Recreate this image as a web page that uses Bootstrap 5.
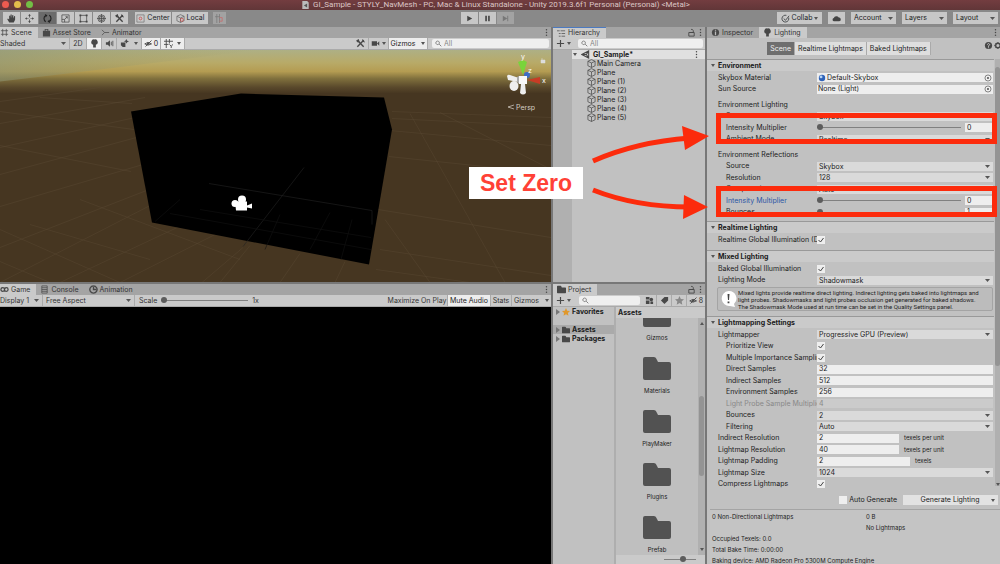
<!DOCTYPE html>
<html lang="en">
<head>
<meta charset="utf-8">
<meta name="viewport" content="width=device-width, initial-scale=1">
<title>GI_Sample - STYLY_NavMesh</title>
<link href="https://cdn.jsdelivr.net/npm/bootstrap@5.3.0/dist/css/bootstrap.min.css" rel="stylesheet">
<script src="https://cdn.jsdelivr.net/npm/bootstrap@5.3.0/dist/js/bootstrap.bundle.min.js"></script>
<style>
:root{--ink:#1c1c1c;--panel:#c1c1c1;--bar:#cacaca;--strip:#a4a4a4;--field:#eee;--drop:#dadada;--red:#fc2b0c}
body{font-family:Inter,"Liberation Sans",sans-serif;font-size:7px;line-height:10px;color:var(--ink);background:#777;height:100vh;overflow:hidden;cursor:default}
svg{display:block;flex:none}
.ic{width:9px;height:9px;fill:currentColor;stroke:currentColor;stroke-width:0;color:#484848}
.tb .ic{color:inherit}
.ol{fill:none;stroke-width:.8}
button,select,input{font:inherit;color:inherit;border:0;border-radius:0;padding:0;margin:0;min-width:0}
button{display:flex;align-items:center;justify-content:center;gap:2px;background:transparent;white-space:nowrap}
h2,p{font-size:7px;line-height:10px;margin:0}
h2{font-weight:700}
.win-title{height:10px;background:linear-gradient(#733d40,#613638);color:#dcc6c6;font:8px/8px Roboto,sans-serif;padding-bottom:1px}
.light{width:7px;height:7px;border-radius:50%}
.main-tools{height:17px;background:#898989;display:grid;grid-template-columns:461fr auto 486fr;padding-bottom:1px}
.tb{height:12px;background:#c7c7c7;color:#444}
.w18{width:17px}
.w12{width:13px}
.w36{width:36px}
.tb.on{background:#6b6b6b;color:#eee}
.tb.off{background:#a2a2a2;color:#777}
.tri{width:0;height:0;border:2px solid transparent;border-top:3px solid #555;border-bottom:0;flex:none}
.tri-r{width:0;height:0;border:3px solid transparent;border-left:4px solid #777;border-right:0;flex:none}
.work{display:grid;grid-template-columns:minmax(0,551fr) minmax(0,152fr) minmax(0,293fr);column-gap:2px;min-height:0}
.tabs{height:11px;background:var(--strip);color:#333;flex:none}
.tabs a{color:#333;text-decoration:none;gap:2px;height:11px;padding:0 6px 0 4px}
.tabs a.on{background:var(--bar)}
.tabs a.blue{border-top:1px solid #4c7ac0}
.tools{height:12px;background:var(--bar);flex:none;border-bottom:1px solid #aaa;color:#333}
.tools button{height:11px;border-right:1px solid #aaa;color:#333;flex-shrink:0}
.tools .lit{background:#ededed;color:#222}
.tools .nb{border:0}
.drop,.plain{appearance:none;background:var(--drop) url("data:image/svg+xml,%3Csvg xmlns='http://www.w3.org/2000/svg' width='5' height='3'%3E%3Cpath d='M0 0h5L2.500 3z' fill='%23555'/%3E%3C/svg%3E") no-repeat right 3px center;height:9px;line-height:9px;width:100%}
.plain{background-color:transparent;border-right:1px solid #aaa;height:11px}
.main-tools .drop{background-color:#c7c7c7;height:12px;line-height:12px;padding-left:3px}
.main-tools .w44{width:45px;flex:none}
.w69{width:70px}.w42{width:43px}.w92{width:92px}
.search{height:9px;background:#efefef;border-radius:2px;color:#777;padding:0 3px;gap:2px;min-width:0}
.search .ic{width:7px;height:7px;color:#777}
.search input{background:transparent;width:100%;height:9px;outline:0}
.search input::placeholder{color:#888;opacity:1}
.game,.scene{position:relative;min-height:0;overflow:hidden}
.scene{flex:233 1 0;background:#463621}
.game{flex:258 1 0;background:#000}
.gizmo{position:absolute;right:2px;top:3px}
.hier{flex:233 1 0;background:#b0b0b0;padding-left:19px;min-height:0}
.tree{background:var(--panel);height:100%}
.tree li{height:9px;line-height:9px;padding-left:15px;gap:1px}
.tree li.root{background:#e0e0e0;padding:0 4px 0 1px}
.proj{flex:258 1 0;min-height:0}
.side{width:63px;background:var(--panel);border-right:2px solid #aeaeae;flex:none}
.side div{height:9px;line-height:9px;gap:2px;padding-left:3px;font-weight:700}
.side .ic{width:8px;height:8px}
.side .sel{background:#aaa}
.assets{background:#bfbfbf;min-height:0}
.assets h2{background:#cacaca;padding:1px 2px 0}
.grid-area{display:flex;flex-direction:column;justify-content:flex-end;align-items:center;gap:14px;overflow:hidden;min-height:0;flex:1 1 0}
.grid-area figure{margin:0;display:flex;flex-direction:column;align-items:center;gap:6px;flex:none}
.grid-area figcaption{font-size:6px;line-height:10px}
.sbar{width:7px;background:#b0b0b0;flex:none}
.thumb{width:5px;border-radius:3px;background:#949494}
.insp{background:var(--panel);position:relative;min-height:0;overflow:hidden}
.seg button{height:13px;padding:0 3px;background:#dedede;border-right:1px solid #aaa}
.seg button.on{background:#6e6e6e;color:#eee}
.sec{height:12px;background:#cacaca;border-top:1px solid #999;padding-left:4px;gap:3px;margin-right:6px}
.rows{display:grid;grid-auto-rows:1fr;align-items:center;padding-right:7px;position:relative}
.n1{height:12px}.n2{height:23px}.n4{height:46px}.n6{height:69px}.n14{height:161px}
.rw{display:flex;align-items:center;height:10px;white-space:nowrap}
.rw>label,.rw>.lb{width:110px;padding-left:11px;flex:none;overflow:hidden}
.rw.in>label{padding-left:19px}
.rw select,.rw .tx{padding-left:2px}
.tx{background:var(--field);height:9px;width:100%;outline:0}
.obj{background:var(--field);height:9px;width:100%;padding:0 1px;gap:1px}
.obj input{background:transparent;width:100%;height:9px}
.obj .ic{width:8px;height:8px}
.half{width:82px}.most{width:93px}
.unit{padding-left:5px;font-size:6px}
.dis{color:#888}.dis .tx{background:#cbcbcb}
.num{width:28px;flex:none}
input[type=range]{appearance:none;background:transparent;height:9px;flex:1 1 0;width:50px}
input[type=range]::-webkit-slider-runnable-track{height:1px;background:#808080}
input[type=range]::-webkit-slider-thumb{appearance:none;width:6px;height:6px;border-radius:50%;background:#5c5c5c;margin-top:-3px}
input[type=checkbox]{appearance:none;width:8px;height:8px;background:#eee;flex:none}
input[type=checkbox]:checked{background:#eee url("data:image/svg+xml,%3Csvg xmlns='http://www.w3.org/2000/svg' viewBox='0 0 8 8'%3E%3Cpath d='M1.500 4l2 2L6.500 2' fill='none' stroke='%23444'/%3E%3C/svg%3E")}
.tip{height:24px;margin:1px 7px 5px 10px;border:1px solid #a4a4a4;background:#bcbcbc;border-radius:2px;gap:1px;padding-left:2px}
.tip p{font:6px/7px Roboto,sans-serif;white-space:nowrap}
.frame{position:absolute;left:9px;right:3px;height:31px;border:5px solid var(--red);pointer-events:none;z-index:2}
.f-a{top:14px}.f-b{top:37px}
.gen{height:10px;background:#e2e2e2;width:95px;padding-right:3px}
.stat{border-top:1px solid #a4a4a4;background:#c4c4c4;margin-left:3px;padding:1px 2px;display:grid;grid-template-columns:minmax(0,155fr) minmax(0,133fr);grid-auto-rows:11px;align-items:center;font-size:6px;height:55px}
.vscroll{position:absolute;right:0;top:32px;width:5px;height:427px;background:#b0b0b0}
.note-layer{position:absolute;inset:0;pointer-events:none;z-index:3}
.note{position:absolute;left:46.9%;top:167px;background:#fff;color:#ff4136;font:bold 23px/32px "Liberation Sans",sans-serif;padding:0 11px}
</style>
</head>
<body class="d-flex flex-column position-relative">
<svg width="0" height="0" class="position-absolute">
 <defs>
 <symbol id="folder" viewBox="0 0 28 23"><path d="M0 2Q0 0 2 0H11Q13 0 14 3L15 5H26Q28 5 28 7V21Q28 23 26 23H2Q0 23 0 21Z"/></symbol>
 <symbol id="cube" viewBox="0 0 10 10"><path d="M5 .7L9 2.500V7.500L5 9.400 1 7.500V2.500ZM1 2.500L5 4.400 9 2.500M5 4.400V9.400"/></symbol>
 <symbol id="eye" viewBox="0 0 12 10"><path d="M1 5.500Q5 1.500 10 5.500Q5 9 1 5.500M2 9L10 1" fill="none" stroke-width="1.200"/><circle cx="5.500" cy="5.300" r="1.500"/></symbol>
 <symbol id="bulb" viewBox="0 0 10 10"><path d="M5 .5A3 3 0 0 1 6.500 6.300V9.500H3.500V6.300A3 3 0 0 1 5 .5Z"/></symbol>
 <symbol id="lock" viewBox="0 0 10 10"><path d="M2 5H8V9H2ZM3 5H7M7 5V3Q6.500 1.200 4.500 1.500" fill="none" stroke-width="1"/></symbol>
 <symbol id="dots" viewBox="0 0 4 10"><circle cx="2" cy="2" r=".8"/><circle cx="2" cy="5" r=".8"/><circle cx="2" cy="8" r=".8"/></symbol>
 <symbol id="mag" viewBox="0 0 10 10"><path d="M6 6L9 9M3.800 1.500A2.500 2.500 0 1 1 3.700 1.500" fill="none" stroke-width="1.300"/></symbol>
 <symbol id="wrench" viewBox="0 0 10 10"><path d="M1.500 1.500L8.500 8.500M8.500 1.500L1.500 8.500" fill="none" stroke-width="1.500"/><path d="M0 2L3 0 4 3 2 4ZM7 0L9 2 10 4 7 3Z"/></symbol>
 <symbol id="cam" viewBox="0 0 12 10"><path d="M1 2H8V8H1ZM8 5L11 2V8Z"/></symbol>
 <symbol id="star" viewBox="0 0 10 10"><path d="M5 0L6.500 3.300 10 3.700 7.400 6.100 8.100 9.700 5 7.900 1.900 9.700 2.600 6.100 0 3.700 3.500 3.300Z"/></symbol>
 <symbol id="plus" viewBox="0 0 10 10"><path d="M5 1V9M1 5H9" fill="none" stroke-width="1.300"/></symbol>
 <symbol id="pick" viewBox="0 0 10 10"><circle cx="5" cy="5" r="3.800" fill="none" stroke-width=".8"/><circle cx="5" cy="5" r="1.200"/></symbol>
 </defs>
</svg>

<header class="win-title d-flex align-items-center position-relative flex-shrink-0">
 <div class="d-flex position-absolute start-0" style="gap:5px;padding-left:2px"><span class="light" style="background:#ee5b50"></span><span class="light" style="background:#e3bd4b"></span><span class="light" style="background:#73be45"></span></div>
 <div class="d-flex align-items-center gap-1 mx-auto pe-2 text-nowrap"><svg width="7" height="8" viewBox="0 0 8 10"><path d="M0 0H6L8 2V10H0Z" fill="#bbb"/><path d="M6 3L2 5.500 6 8Z" fill="#555"/></svg>GI_Sample - STYLY_NavMesh - PC, Mac &amp; Linux Standalone - Unity 2019.3.6f1 Personal (Personal) &lt;Metal&gt;</div>
</header>

<nav class="main-tools align-items-center flex-shrink-0" aria-label="Main toolbar">
 <div class="d-flex align-items-center">
  <div class="d-flex" style="gap:1px;margin-left:3px">
   <button class="tb w18" aria-label="Hand"><svg class="ic" viewBox="0 0 10 10"><path d="M2.500 9.500L.3 5.800 1 5 2.400 6V2H3.600V4.500L4 .6H5.200V4.500L6 1H7L7 5 8 2.300 9 2.600V6.500L7.500 9.500Z"/></svg></button>
   <button class="tb w18" aria-label="Move"><svg class="ic" viewBox="0 0 10 10"><path d="M5 0L6.500 2H3.500ZM5 10L3.500 8H6.500ZM0 5L2 3.500V6.500ZM10 5L8 6.500V3.500ZM4.600 2H5.400V4H4.600ZM4.600 6H5.400V8H4.600ZM2 4.600H4V5.400H2ZM6 4.600H8V5.400H6Z"/></svg></button>
   <button class="tb w18 on" aria-label="Rotate" style="color:#222"><svg class="ic" viewBox="0 0 10 10"><path d="M3 8.500A4 4 0 0 1 3 1.700M7 1.500A4 4 0 0 1 7 8.300" fill="none" stroke-width="1.300"/><path d="M2 0L5 1.500 3 3.800ZM8 10L5 8.500 7 6.200Z"/></svg></button>
   <button class="tb w18" aria-label="Scale"><svg class="ic ol" viewBox="0 0 10 10"><path d="M1 1H9V9H1ZM1 6H4V9M4 6L7 3M5 3H7V5"/></svg></button>
   <button class="tb w18" aria-label="Rect"><svg class="ic ol" viewBox="0 0 10 10"><path d="M1.500 1.500H8.500V8.500H1.500Z"/><path d="M.5 1.500H2.500M7.500 1.500H9.500M.5 8.500H2.500M7.500 8.500H9.500" stroke-width="2"/></svg></button>
   <button class="tb w18" aria-label="Transform"><svg class="ic ol" viewBox="0 0 10 10"><circle cx="5" cy="5" r="4"/><path d="M5 0V10M0 5H10M3 3H7V7H3Z"/></svg></button>
   <button class="tb w18" aria-label="Custom tools"><svg class="ic"><use href="#wrench"/></svg></button>
  </div>
  <div class="d-flex" style="gap:1px;margin-left:7px">
   <button class="tb w36 text-dark"><svg class="ic ol" viewBox="0 0 10 10"><path d="M1 1H9V9H1Z" stroke="#777"/><circle cx="5" cy="5" r="1.500" stroke="#c44"/></svg>Center</button>
   <button class="tb w36 text-dark"><svg class="ic ol" viewBox="0 0 10 10"><use href="#cube" stroke="#666"/><circle cx="6.500" cy="6.500" r="1.700" stroke="#c44"/></svg>Local</button>
  </div>
  <button class="tb w12 off" style="margin-left:5px" aria-label="Snap"><svg class="ic ol" viewBox="0 0 10 10"><path d="M2 0V10M5 0V10M0 3H5"/><path d="M5 4H8V8H5" stroke="#c66"/></svg></button>
 </div>
 <div class="d-flex" style="gap:1px">
  <button class="tb w18" aria-label="Play"><svg class="ic" viewBox="0 0 10 10"><path d="M2.500 2L8 5 2.500 8Z"/></svg></button>
  <button class="tb w18" aria-label="Pause"><svg class="ic" viewBox="0 0 10 10"><path d="M2.500 2H4.300V8H2.500ZM5.700 2H7.500V8H5.700Z"/></svg></button>
  <button class="tb w18 off" aria-label="Step"><svg class="ic" viewBox="0 0 10 10"><path d="M2 2L7 5 2 8ZM7 2H8V8H7Z"/></svg></button>
 </div>
 <div class="d-flex justify-content-end" style="gap:6px;padding-right:2px">
  <button class="tb w44 text-dark"><svg class="ic ol" viewBox="0 0 10 10"><path d="M8.500 4A3.800 3.800 0 1 1 6 1.500M3 5L5 7 9 2"/></svg>Collab<span class="tri"></span></button>
  <button class="tb w18" aria-label="Cloud"><svg class="ic" viewBox="0 0 10 10"><path d="M2 8A1.800 1.800 0 0 1 2 4.500A3 3 0 0 1 7.500 4A2 2 0 0 1 8 8Z"/></svg></button>
  <select class="drop w44" aria-label="Account"><option>Account</option></select>
  <select class="drop w44" aria-label="Layers"><option>Layers</option></select>
  <select class="drop w44" aria-label="Layout"><option>Layout</option></select>
 </div>
</nav>

<main class="work flex-grow-1">
 <!-- scene and game views -->
 <section class="d-flex flex-column" style="min-height:0">
  <nav class="tabs d-flex align-items-center">
   <a href="#" class="on d-flex align-items-center ps-0"><svg class="ic ol" viewBox="0 0 10 10"><path d="M3 1V9M7 1V9M1 3H9M1 7H9"/></svg>Scene</a>
   <a href="#" class="d-flex align-items-center"><svg class="ic" viewBox="0 0 10 10"><path d="M1 3H9V9.500H1ZM3 3V1H7V3H6V2H4V3Z"/></svg>Asset Store</a>
   <a href="#" class="d-flex align-items-center"><svg class="ic ol" viewBox="0 0 10 10"><path d="M1 2L4 5 1 8M4 5H9"/></svg>Animator</a>
   <svg class="ic ms-auto"><use href="#dots"/></svg>
  </nav>
  <div class="tools d-flex align-items-center">
   <div class="w69"><select class="plain" aria-label="Draw mode"><option>Shaded</option></select></div>
   <button class="w18">2D</button>
   <button class="lit" style="width:15px" aria-label="Lighting"><svg class="ic"><use href="#bulb"/></svg></button>
   <button style="width:15px" aria-label="Audio"><svg class="ic" viewBox="0 0 10 10"><path d="M1 3.500H3L5.500 1.500V8.500L3 6.500H1Z"/><path d="M7 3V7M8.700 2V8" stroke-width=".9"/></svg></button>
   <button style="width:25px;gap:5px" aria-label="Effects"><svg class="ic" viewBox="0 0 10 10"><path d="M1 4H6V9H3L1 7ZM7 0L8 2 10 2.500 8 3.500 7 5 6 3 4 2.500 6 2Z"/></svg><span class="tri"></span></button>
   <button class="lit" style="width:19px;gap:1px"><svg class="ic"><use href="#eye"/></svg>0</button>
   <button class="lit" style="width:24px;gap:4px" aria-label="Grid"><svg class="ic" viewBox="0 0 10 10"><path d="M2.500 0V10M0 2.500H10M0 6H5M6 0V5M6 6L8 8 10 6M8 8V10" fill="none" stroke-width="1"/></svg><span class="tri"></span></button>
   <button class="ms-auto" style="width:16px" aria-label="Tools"><svg class="ic"><use href="#wrench"/></svg></button>
   <button style="width:20px" aria-label="Camera"><svg class="ic"><use href="#cam"/></svg><span class="tri"></span></button>
   <button class="lit" style="width:39px;gap:6px">Gizmos<span class="tri"></span></button>
   <div class="search d-flex align-items-center ms-1" style="width:117px;margin-right:2px"><svg class="ic"><use href="#mag"/></svg><input type="search" aria-label="Search scene" placeholder="All"></div>
  </div>
  <div class="scene">
   <svg class="w-100 h-100" viewBox="0 50 551 233" preserveAspectRatio="xMidYMid slice">
    <defs><linearGradient id="sky" x1="0" y1="0" x2="0" y2="1"><stop offset="0" stop-color="#adb086"/><stop offset=".3" stop-color="#b8aa68"/><stop offset=".5" stop-color="#b49c52"/><stop offset=".66" stop-color="#80703d"/><stop offset=".86" stop-color="#59482b"/><stop offset="1" stop-color="#463621"/></linearGradient>
    <linearGradient id="haze"><stop offset="0" stop-color="#8e9472" stop-opacity=".6"/><stop offset="1" stop-color="#a5a06a" stop-opacity="0"/></linearGradient></defs>
    <rect y="50" width="551" height="233" fill="#463621"/>
    <rect y="50" width="551" height="44" fill="url(#sky)"/>
    <path d="M0 50H260Q120 68 0 82Z" fill="url(#haze)"/>
    <g stroke="#5c4b34" stroke-width=".6" fill="none" opacity=".7">
     <path d="M0 102L100 88M0 124L145 98M0 148L135 118M0 175L140 137M0 207L143 165M0 248L149 190M0 112L134 130M0 146L131 172M40 98L132 104M392 112L551 118M392 119L551 127M390 131L551 146M389 157L551 174M372 209L551 238M410 114L505 283M243 248L202 283M30 225L150 260M80 200L240 260M0 230L120 283M0 262L50 283M60 283L190 222M120 283L215 235M0 283L152 205M250 246L220 283M300 254L280 283M345 262L335 283M385 220L430 283M380 250L551 276M376 270L470 283M440 113L551 170"/>
    </g>
    <path d="M131 112L241 94 384 98 392 130 369 265 152 223Z" fill="#000"/>
    <g stroke="#242424" stroke-width=".6" fill="none"><path d="M304 168L243 247M209 184L372 211V225"/><g stroke="#131313"><path d="M170 214L371 250M200 210L371 238M330 213L310 250M352 220L341 260M280 215L265 250M180 200L155 222"/></g></g>
    <g fill="#fff"><circle cx="235" cy="204" r="3.500"/><circle cx="242" cy="200" r="4"/><path d="M235 202H247V206L252 204V209L247 208V211H236Z"/></g>
   </svg>
   <svg class="gizmo" width="50" height="60" viewBox="499 53 50 60">
    <path d="M518 62L523 60 527 62 523 75Z" fill="#79d43b"/><circle cx="527" cy="75" r="3" fill="#3e6cc4"/>
    <path d="M527 80L540 77V84Z" fill="#c83c25"/><ellipse cx="514" cy="86" rx="4.500" ry="5" fill="#eee"/>
    <path d="M507 76Q508 74 510 75L519 78 518 82 508 80ZM521 84H525L526 93Q523 96 520 93Z" fill="#eee"/><path d="M519 76H527V84H519Z" fill="#f8f8f8"/><path d="M519 84L517 82V77L519 76Z" fill="#aaa"/>
    <path d="M541 60H545V63H541ZM542 60V58" stroke="#ddd" stroke-width=".5" fill="#ddd"/>
    <g fill="#fff" font-size="7"><text x="521" y="59">y</text><text x="528" y="73">z</text><text x="542" y="83">x</text></g>
    <path d="M514 105L508 107 514 109" fill="none" stroke="#c9c2b8" stroke-width=".8"/><text x="516" y="110" font-size="7" fill="#d4cec4">Persp</text>
   </svg>
  </div>
  <nav class="tabs d-flex align-items-center" style="margin-top:2px">
   <a href="#" class="on d-flex align-items-center ps-0"><svg class="ic ol" viewBox="0 0 10 10"><path d="M1 5A2 2 0 1 1 5 5A2 2 0 1 1 1 5M5 5A2 2 0 1 1 9 5A2 2 0 1 1 5 5" stroke-width="1.400"/></svg>Game</a>
   <a href="#" class="d-flex align-items-center"><svg class="ic ol" viewBox="0 0 10 10"><path d="M2 1H8V9H2ZM2 3H8M2 5H8M2 7H8"/></svg>Console</a>
   <a href="#" class="d-flex align-items-center"><svg class="ic ol" viewBox="0 0 10 10"><path d="M5 1A4 4 0 1 1 4.900 1M5 2V5H8" stroke-width="1.500"/></svg>Animation</a>
   <svg class="ic ms-auto"><use href="#dots"/></svg>
  </nav>
  <div class="tools d-flex align-items-center">
   <div class="w42"><select class="plain" aria-label="Display"><option>Display 1</option></select></div>
   <div class="w92"><select class="plain" style="padding-left:3px" aria-label="Aspect"><option>Free Aspect</option></select></div>
   <label for="scale" class="ms-1 me-1">Scale</label><input id="scale" type="range" min="1" max="5" value="1" style="flex:0 1 87px"><span class="ps-1">1x</span>
   <button class="ms-auto" style="width:61px">Maximize On Play</button>
   <button class="lit" style="width:43px">Mute Audio</button>
   <button style="width:21px">Stats</button>
   <button class="nb" style="width:39px;gap:6px">Gizmos<span class="tri"></span></button>
  </div>
  <div class="game"></div>
 </section>

 <!-- hierarchy and project -->
 <section class="d-flex flex-column" style="min-height:0">
  <nav class="tabs d-flex align-items-center">
   <a href="#" class="on blue d-flex align-items-center"><svg class="ic ol" viewBox="0 0 10 10"><path d="M0 2H3M4 2H9M2 5H4M5 5H9M2 8H4M5 8H9"/></svg>Hierarchy</a>
   <svg class="ic ms-auto"><use href="#lock"/></svg><svg class="ic"><use href="#dots"/></svg>
  </nav>
  <div class="tools d-flex align-items-center">
   <button class="nb" style="padding-left:3px" aria-label="Create"><svg class="ic"><use href="#plus"/></svg><span class="tri"></span></button>
   <div class="search d-flex align-items-center flex-grow-1" style="margin:0 2px 0 7px"><svg class="ic"><use href="#mag"/></svg><input type="search" aria-label="Search hierarchy" placeholder="All"></div>
  </div>
  <div class="hier">
   <ul class="tree list-unstyled m-0">
    <li class="root d-flex align-items-center"><span class="tri"></span><svg class="ic ol" style="margin:0 2px 0 3px" viewBox="0 0 10 10"><path d="M8.500 1V9L1 5ZM1 5H6L8.500 1M6 5L8.500 9" stroke-width="1.200"/></svg><b>GI_Sample*</b><svg class="ic ms-auto"><use href="#dots"/></svg></li>
    <li class="d-flex align-items-center"><svg class="ic ol"><use href="#cube"/></svg>Main Camera</li>
    <li class="d-flex align-items-center"><svg class="ic ol"><use href="#cube"/></svg>Plane</li>
    <li class="d-flex align-items-center"><svg class="ic ol"><use href="#cube"/></svg>Plane (1)</li>
    <li class="d-flex align-items-center"><svg class="ic ol"><use href="#cube"/></svg>Plane (2)</li>
    <li class="d-flex align-items-center"><svg class="ic ol"><use href="#cube"/></svg>Plane (3)</li>
    <li class="d-flex align-items-center"><svg class="ic ol"><use href="#cube"/></svg>Plane (4)</li>
    <li class="d-flex align-items-center"><svg class="ic ol"><use href="#cube"/></svg>Plane (5)</li>
   </ul>
  </div>
  <nav class="tabs d-flex align-items-center" style="margin-top:2px">
   <a href="#" class="on d-flex align-items-center"><svg class="ic"><use href="#folder"/></svg>Project</a>
   <svg class="ic ms-auto"><use href="#lock"/></svg><svg class="ic"><use href="#dots"/></svg>
  </nav>
  <div class="tools d-flex align-items-center">
   <button class="nb" style="padding-left:3px" aria-label="Create asset"><svg class="ic"><use href="#plus"/></svg><span class="tri"></span></button>
   <div class="search d-flex align-items-center flex-grow-1" style="margin:0 2px 0 8px"><svg class="ic"><use href="#mag"/></svg><input type="search" aria-label="Search assets"></div>
   <button style="width:15px" aria-label="Filter by type"><svg class="ic" viewBox="0 0 10 10"><path d="M1 1H5V4H1ZM1 5H5V9H1ZM6 6H9V9H6Z"/><circle cx="7" cy="4" r="2"/></svg></button>
   <button style="width:15px" aria-label="Filter by label"><svg class="ic" viewBox="0 0 10 10"><path d="M5 1H9V5L5 9 1 5Z"/></svg></button>
   <button style="width:15px" aria-label="Save search"><svg class="ic" style="color:#888"><use href="#star"/></svg></button>
   <button class="nb" style="width:18px;gap:1px"><svg class="ic"><use href="#eye"/></svg>8</button>
  </div>
  <div class="proj d-flex">
   <div class="side">
    <div class="d-flex align-items-center"><span class="tri-r"></span><svg class="ic" style="color:#e0982c"><use href="#star"/></svg>Favorites</div>
    <div class="sel d-flex align-items-center" style="margin-top:9px"><span class="tri-r"></span><svg class="ic"><use href="#folder"/></svg>Assets</div>
    <div class="d-flex align-items-center"><span class="tri-r"></span><svg class="ic"><use href="#folder"/></svg>Packages</div>
   </div>
   <div class="assets d-flex flex-column flex-grow-1">
    <h2>Assets</h2>
    <div class="d-flex flex-grow-1" style="min-height:0">
     <div class="grid-area">
      <figure><svg width="28" height="23" fill="#525252"><use href="#folder"/></svg><figcaption>Gizmos</figcaption></figure>
      <figure><svg width="28" height="23" fill="#525252"><use href="#folder"/></svg><figcaption>Materials</figcaption></figure>
      <figure><svg width="28" height="23" fill="#525252"><use href="#folder"/></svg><figcaption>PlayMaker</figcaption></figure>
      <figure><svg width="28" height="23" fill="#525252"><use href="#folder"/></svg><figcaption>Plugins</figcaption></figure>
      <figure><svg width="28" height="23" fill="#525252"><use href="#folder"/></svg><figcaption>Prefab</figcaption></figure>
     </div>
     <div class="sbar d-flex flex-column align-items-center justify-content-between py-1"><span class="tri" style="rotate:180deg"></span><span class="thumb" style="height:35%;margin-bottom:26%"></span><span class="tri"></span></div>
    </div>
    <div class="d-flex justify-content-end" style="height:9px;background:#cacaca;padding-right:9px"><input type="range" value="62" aria-label="Icon size" style="flex:0 1 32px"></div>
   </div>
  </div>
 </section>

 <!-- lighting window -->
 <section class="insp d-flex flex-column">
  <nav class="tabs d-flex align-items-center">
   <a href="#" class="d-flex align-items-center"><svg class="ic" viewBox="0 0 10 10"><circle cx="5" cy="5" r="4"/><path d="M5 4V8M5 2V3" stroke="#bbb" stroke-width="1.400"/></svg>Inspector</a>
   <a href="#" class="on d-flex align-items-center"><svg class="ic"><use href="#bulb"/></svg>Lighting</a>
   <svg class="ic ms-auto"><use href="#dots"/></svg>
  </nav>
  <div class="d-flex justify-content-center align-items-center position-relative" style="height:21px;padding-right:9px">
   <div class="seg d-flex"><button class="on">Scene</button><button>Realtime Lightmaps</button><button>Baked Lightmaps</button></div>
   <div class="position-absolute end-0 top-0 d-flex" style="gap:1px;padding-top:3px"><svg class="ic" viewBox="0 0 10 10"><circle cx="5" cy="5" r="4"/><path d="M3.500 4Q5 1.500 6.500 4L5 5.500V6.500M5 7V8" fill="none" stroke="#ccc" stroke-width="1"/></svg><svg class="ic ol" style="width:6px" viewBox="0 0 6 10"><circle cx="4" cy="5" r="2.500" stroke-width="1.500"/><path d="M4 1V2M4 8V9M0 5H1M1.500 2.500L2 3M1.500 7.500L2 7" stroke-width="1.400"/></svg></div>
  </div>
  <div class="sec d-flex align-items-center"><span class="tri"></span><h2>Environment</h2></div>
  <div class="rows n2" style="margin-top:1px">
   <div class="rw"><label for="sky-m">Skybox Material</label><div class="obj d-flex align-items-center"><svg class="ic" viewBox="0 0 10 10"><circle cx="5" cy="5" r="4" fill="#2e62b8"/><circle cx="3.800" cy="3.600" r="1.800" fill="#b8d4f4"/></svg><input id="sky-m" value="Default-Skybox"><svg class="ic"><use href="#pick"/></svg></div></div>
   <div class="rw"><label for="sun">Sun Source</label><div class="obj d-flex align-items-center"><input id="sun" value="None (Light)"><svg class="ic"><use href="#pick"/></svg></div></div>
  </div>
  <div class="rows n4" style="margin-top:4px">
   <div class="rw"><span class="lb">Environment Lighting</span></div>
   <div class="rw in"><label for="s1">Source</label><select id="s1" class="drop"><option>Skybox</option></select></div>
   <div class="rw in"><label for="i1">Intensity Multiplier</label><input id="i1" type="range" max="8" value="0"><input class="tx num ms-1" aria-label="Lighting intensity" value="0"></div>
   <div class="rw in"><label for="am">Ambient Mode</label><select id="am" class="drop"><option>Realtime</option></select></div>
   <div class="frame f-a"></div>
  </div>
  <div class="rows n6" style="margin-top:4px">
   <div class="rw"><span class="lb">Environment Reflections</span></div>
   <div class="rw in"><label for="s2">Source</label><select id="s2" class="drop"><option>Skybox</option></select></div>
   <div class="rw in"><label for="rs">Resolution</label><select id="rs" class="drop"><option>128</option></select></div>
   <div class="rw in"><label for="cp">Compression</label><select id="cp" class="drop"><option>Auto</option></select></div>
   <div class="rw in"><label for="i2" style="color:#2a55a5">Intensity Multiplier</label><input id="i2" type="range" max="1" value="0"><input class="tx num ms-1" aria-label="Reflection intensity" value="0"></div>
   <div class="rw in"><label for="b1">Bounces</label><input id="b1" type="range" min="1" max="5" value="1"><input class="tx num ms-1" aria-label="Reflection bounces" value="1"></div>
   <div class="frame f-b"></div>
  </div>
  <div class="sec d-flex align-items-center" style="margin-top:3px"><span class="tri"></span><h2>Realtime Lighting</h2></div>
  <div class="rows n1" style="margin:1px 0 4px"><div class="rw"><label for="rg">Realtime Global Illumination (D</label><input id="rg" type="checkbox" checked></div></div>
  <div class="sec d-flex align-items-center"><span class="tri"></span><h2>Mixed Lighting</h2></div>
  <div class="rows n2" style="margin-top:1px">
   <div class="rw"><label for="bg">Baked Global Illumination</label><input id="bg" type="checkbox" checked></div>
   <div class="rw"><label for="lm">Lighting Mode</label><select id="lm" class="drop"><option>Shadowmask</option></select></div>
  </div>
  <div class="tip d-flex align-items-center"><svg width="17" height="18" viewBox="0 0 17 18"><path d="M8.500 1A7.500 7.500 0 0 1 14 14L15 17 10 16A7.500 7.500 0 1 1 8.500 1Z" fill="#fff"/><path d="M7.500 4H9.500L9 10H8ZM7.600 11.500H9.400V13.300H7.600Z" fill="#444"/></svg>
   <p>Mixed lights provide realtime direct lighting. Indirect lighting gets baked into lightmaps and<br>light probes. Shadowmasks and light probes occlusion get generated for baked shadows.<br>The Shadowmask Mode used at run time can be set in the Quality Settings panel.</p></div>
  <div class="sec d-flex align-items-center"><span class="tri"></span><h2>Lightmapping Settings</h2></div>
  <div class="rows n14" style="margin-top:1px">
   <div class="rw"><label for="lp">Lightmapper</label><select id="lp" class="drop"><option>Progressive GPU (Preview)</option></select></div>
   <div class="rw in"><label for="pv">Prioritize View</label><input id="pv" type="checkbox" checked></div>
   <div class="rw in"><label for="mi">Multiple Importance Sampling</label><input id="mi" type="checkbox" checked></div>
   <div class="rw in"><label for="ds">Direct Samples</label><input id="ds" class="tx" value="32"></div>
   <div class="rw in"><label for="is">Indirect Samples</label><input id="is" class="tx" value="512"></div>
   <div class="rw in"><label for="es">Environment Samples</label><input id="es" class="tx" value="256"></div>
   <div class="rw in dis"><label for="lps">Light Probe Sample Multiplier</label><input id="lps" class="tx" value="4" disabled></div>
   <div class="rw in"><label for="bo">Bounces</label><select id="bo" class="drop"><option>2</option></select></div>
   <div class="rw in"><label for="fi">Filtering</label><select id="fi" class="drop"><option>Auto</option></select></div>
   <div class="rw"><label for="ir">Indirect Resolution</label><input id="ir" class="tx half" value="2"><span class="unit">texels per unit</span></div>
   <div class="rw"><label for="lr">Lightmap Resolution</label><input id="lr" class="tx half" value="40"><span class="unit">texels per unit</span></div>
   <div class="rw"><label for="pd">Lightmap Padding</label><input id="pd" class="tx most" value="2"><span class="unit">texels</span></div>
   <div class="rw"><label for="ls">Lightmap Size</label><select id="ls" class="drop"><option>1024</option></select></div>
   <div class="rw"><label for="cl">Compress Lightmaps</label><input id="cl" type="checkbox" checked></div>
  </div>
  <div class="d-flex justify-content-end align-items-center mt-auto mb-1" style="gap:2px;height:10px;padding-right:2px"><input id="ag" type="checkbox"><label for="ag" class="me-1">Auto Generate</label><button class="gen"><span class="mx-auto ps-2">Generate Lighting</span><span class="tri"></span></button></div>
  <div class="stat"><span>0 Non-Directional Lightmaps</span><span>0 B</span><span></span><span>No Lightmaps</span><span>Occupied Texels: 0.0</span><span></span><span>Total Bake Time: 0:00:00</span><span></span><span class="text-nowrap">Baking device: AMD Radeon Pro 5300M Compute Engine</span></div>
  <div class="vscroll d-flex flex-column justify-content-between align-items-center"><span class="thumb" style="height:70%;margin-top:8px"></span><span class="tri"></span></div>
 </section>
</main>

<!-- callout with arrows -->
<div class="note-layer">
 <svg class="w-100 h-100" viewBox="0 0 1000 564" fill="none" stroke="#fc2b0c" stroke-width="5" stroke-linecap="butt"><path d="M593 161Q636 142 690 138M593 190Q636 207 690 207"/><path d="M682 126L709 136 685 150ZM684 195L708 207 683 219Z" fill="#fc2b0c" stroke="none"/></svg>
 <div class="note">Set Zero</div>
</div>
</body>
</html>
